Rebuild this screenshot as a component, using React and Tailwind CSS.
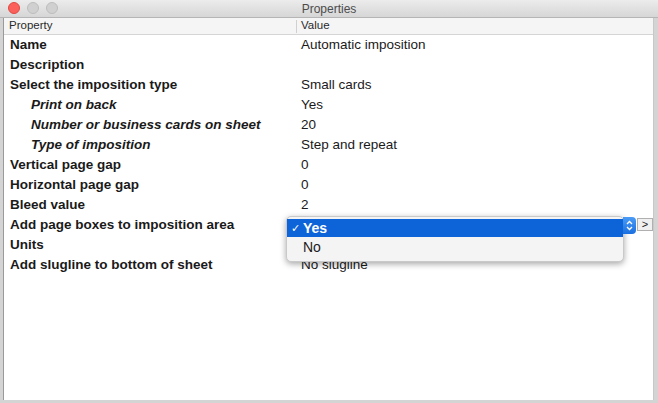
const rows = [
  { label: 'Name', value: 'Automatic imposition' },
  { label: 'Description', value: '' },
  { label: 'Select the imposition type', value: 'Small cards' },
  { label: 'Print on back', value: 'Yes', sub: true },
  { label: 'Number or business cards on sheet', value: '20', sub: true },
  { label: 'Type of imposition', value: 'Step and repeat', sub: true },
  { label: 'Vertical page gap', value: '0' },
  { label: 'Horizontal page gap', value: '0' },
  { label: 'Bleed value', value: '2' },
  { label: 'Add page boxes to imposition area', value: '' },
  { label: 'Units', value: '' },
  { label: 'Add slugline to bottom of sheet', value: 'No slugline' },
]

const font = { fontFamily: '"Liberation Sans", Arial, sans-serif' }

export default function App() {
  return (
    <div className="w-[658px] h-[403px] flex flex-col bg-[#d4d4d4] text-[#1a1a1a] overflow-hidden" style={font}>
      {/* title bar */}
      <div className="relative h-[18px] shrink-0 flex items-center justify-center bg-gradient-to-b from-[#ececec] to-[#d6d6d6] border-b border-[#b5b5b5]">
        <div className="absolute left-[8px] top-[2px] flex gap-[7px]">
          <span className="w-[12px] h-[12px] rounded-full bg-[#fc605b] border border-[#de4a43]" />
          <span className="w-[12px] h-[12px] rounded-full bg-[#d0d0d0] border border-[#bdbdbd]" />
          <span className="w-[12px] h-[12px] rounded-full bg-[#d0d0d0] border border-[#bdbdbd]" />
        </div>
        <span className="text-[12px] text-[#4c4c4c]">Properties</span>
      </div>

      {/* content */}
      <div className="flex-1 flex pl-[3px] pr-[4px] pb-[3px]">
        <div className="relative flex-1 bg-white border-l border-[#9a9a9a] border-r border-r-[#c8c8c8] flex flex-col">
          <div className="h-[17px] flex items-center bg-[#f5f5f5] border-b border-[#d5d5d5] text-[11.5px] text-[#2a2a2a]">
            <div className="w-[292px] pl-[5px]">Property</div>
            <div className="h-[13px] border-l border-[#d0d0d0] pl-[4px] flex items-center">Value</div>
          </div>
          <div className="flex flex-col">
            {rows.map((r) => (
              <div key={r.label} className="h-[20px] flex items-center text-[13.5px]">
                <div className={`w-[293px] font-bold ${r.sub ? 'pl-[27px] italic' : 'pl-[6px]'}`}>{r.label}</div>
                <div className="pl-[4px]">{r.value}</div>
              </div>
            ))}
          </div>

          {/* popup menu */}
          <div className="absolute left-[282px] top-[198px] w-[338px] h-[46px] bg-[#f4f4f4] rounded-[5px] shadow-[0_2px_6px_rgba(0,0,0,0.35)] border border-[#c9c9c9] pt-[2px] text-[14px]">
            <div className="h-[18px] bg-[#0d63d8] text-white flex items-center">
              <span className="w-[16px] pl-[4px] text-[11px]">✓</span>
              <span className="font-bold">Yes</span>
            </div>
            <div className="h-[20px] flex items-center pl-[16px]">No</div>
          </div>
          <div className="absolute left-[619px] top-[199px] w-[13px] h-[17px] rounded-r-[4px] bg-gradient-to-b from-[#4a9bf5] to-[#1a6fe0] flex items-center justify-center">
            <svg width="7" height="11" viewBox="0 0 7 11" fill="none" stroke="white" strokeWidth="1.3">
              <path d="M1 4 L3.5 1.5 L6 4" />
              <path d="M1 7 L3.5 9.5 L6 7" />
            </svg>
          </div>
          <div className="absolute left-[633px] top-[200px] w-[16px] h-[13px] bg-[#f0f0f0] border border-[#b0b0b0] flex items-center justify-center text-[11px] leading-none">
            &gt;
          </div>
        </div>
      </div>
    </div>
  )
}
